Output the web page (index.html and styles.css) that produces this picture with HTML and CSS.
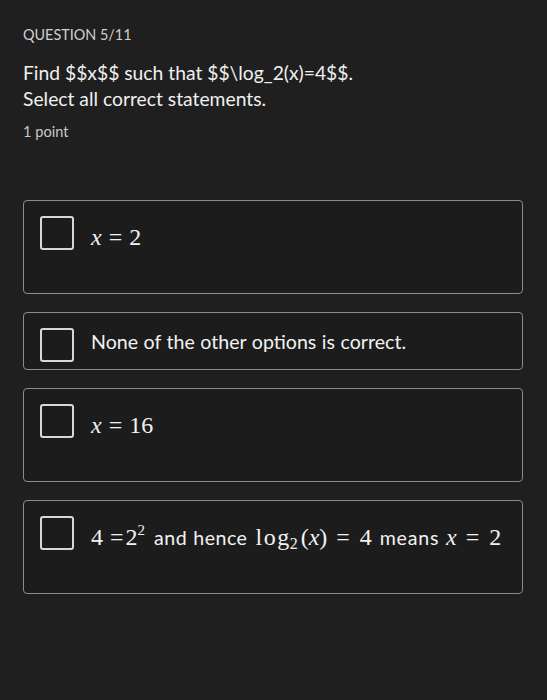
FILE: index.html
```html
<!DOCTYPE html>
<html>
<head>
<meta charset="utf-8">
<link rel="stylesheet" href="styles.css">
</head>
<body>
<div class="page">
  <div class="qnum">QUESTION 5/11</div>
  <div class="prompt">
    <div>Find $$x$$ such that $$\log_2(x)=4$$.</div>
    <div>Select all correct statements.</div>
  </div>
  <div class="points">1 point</div>
  <div class="options">
    <div class="option tall">
      <span class="box"></span>
      <span class="label math"><span class="m"><i>x</i><span class="op">=</span>2</span></span>
    </div>
    <div class="option short">
      <span class="box"></span>
      <span class="label">None of the other options is correct.</span>
    </div>
    <div class="option tall">
      <span class="box"></span>
      <span class="label math"><span class="m"><i>x</i><span class="op">=</span>16</span></span>
    </div>
    <div class="option tall">
      <span class="box"></span>
      <span class="label math"><span class="m">4 <span class="opl">=</span>2<sup>2</sup></span><span class="t1"> and hence </span><span class="m"><span class="log">log</span><sub>2</sub>(<i>x</i>)<span class="op wide">=</span><span class="four">4</span></span><span class="t2"> means </span><span class="m"><i>x</i><span class="op wide">=</span>2</span></span>
    </div>
  </div>
</div>
</body>
</html>
```
FILE: styles.css
```css
html, body {
  margin: 0;
  padding: 0;
  background: #1f1f1f;
}
.page {
  padding: 26px 23px 0 23px;
  width: 500px;
  font-family: Lato, "Open Sans", sans-serif;
  color: #e6e6e6;
}
.qnum {
  font-size: 14.4px;
  line-height: 18px;
  color: #d0d0d0;
}
.prompt {
  margin-top: 16px;
  font-size: 19.3px;
  line-height: 26px;
  color: #f0f0f0;
}
.points {
  margin-top: 11px;
  font-size: 14.6px;
  line-height: 18px;
  color: #c8c8c8;
}
.options {
  margin-top: 59px;
  display: flex;
  flex-direction: column;
  gap: 18px;
}
.option {
  box-sizing: border-box;
  border: 1.5px solid #8c8c8c;
  border-radius: 4px;
  background: #1c1c1c;
  display: flex;
  align-items: flex-start;
  padding: 15px 16px 0 16px;
}
.option.tall { height: 94px; }
.option.short { height: 58px; }
.box {
  box-sizing: border-box;
  flex: none;
  width: 34px;
  height: 34px;
  border: 2px solid #d8d8d8;
  border-radius: 3px;
}
.label {
  margin-left: 17px;
  padding-top: 2px;
  font-size: 19.6px;
  line-height: 24px;
  color: #f2f2f2;
  white-space: nowrap;
  word-spacing: 0.5px;
}
.label.math { padding-top: 9px; }
.t1 { letter-spacing: 0.5px; }
.t2 { letter-spacing: 0.8px; word-spacing: 1px; }
.m {
  font-family: "Liberation Serif", "DejaVu Serif", serif;
  font-size: 24px;
  word-spacing: 0;
}
.m i { font-style: italic; }
.op { margin: 0 7px; }
.op.wide { margin: 0 10px 0 9px; }
.four { margin-right: 1px; }
.opl { margin: 0 2px 0 1px; }
.log { letter-spacing: 1.5px; margin-left: 2px; }
.m sup { font-size: 15px; vertical-align: 10px; line-height: 0; margin-right: 3px; }
.m sub { font-size: 16px; vertical-align: -4px; line-height: 0; margin-left: -1px; margin-right: 3px; }
```
